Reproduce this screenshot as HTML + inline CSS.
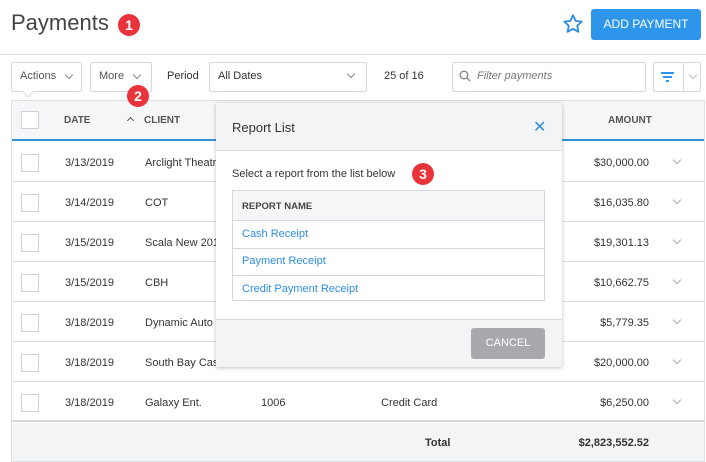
<!DOCTYPE html>
<html><head><meta charset="utf-8"><style>
*{box-sizing:border-box;margin:0;padding:0}
body{width:706px;height:462px;overflow:hidden;background:#fff;font-family:"Liberation Sans",sans-serif;color:#333;position:relative;font-size:11px}
.a{position:absolute}
.badge{position:absolute;width:22px;height:22px;border-radius:50%;background:#e8333a;color:#fff;font-weight:bold;font-size:14px;text-align:center;line-height:22px}
.box{position:absolute;border:1px solid #d4d9e0;background:#fff;border-radius:2px}
.cb{position:absolute;left:21px;width:18px;height:18px;border:1px solid #ccd1d8;background:#fff}
.row{position:absolute;left:11px;width:694px;height:40px;border-bottom:1px solid #dde1e7}
.t{position:absolute;font-size:11px;color:#333}
.chev{position:absolute;width:6px;height:6px;border-right:1px solid #888;border-bottom:1px solid #888;transform:rotate(45deg)}
</style></head><body>
<div class="a" style="left:11px;top:10px;font-size:22px;color:#444">Payments</div>
<div class="badge" style="left:118px;top:14px">1</div>
<svg class="a" style="left:562px;top:13px" width="22" height="22" viewBox="0 0 24 24"><path d="M12 2.5l2.9 6.1 6.6.8-4.9 4.5 1.3 6.6L12 17.2l-5.9 3.3 1.3-6.6L2.5 9.4l6.6-.8z" fill="none" stroke="#2b8de3" stroke-width="2" stroke-linejoin="round"/></svg>
<div class="a" style="left:591px;top:9px;width:110px;height:31px;background:#2d96ea;border-radius:3px;color:#fff;font-size:12px;text-align:center;line-height:31px">ADD PAYMENT</div>
<div class="a" style="left:0;top:54px;width:706px;height:1px;background:#d9dde3"></div>

<div class="box" style="left:11px;top:62px;width:71px;height:30px"></div>
<div class="t" style="left:20px;top:70px;color:#555">Actions</div><div class="chev" style="left:66px;top:72px"></div>
<div class="a" style="left:24px;top:88px;width:8px;height:8px;background:#fff;border-right:1px solid #d4d9e0;border-bottom:1px solid #d4d9e0;transform:rotate(45deg)"></div>
<div class="box" style="left:90px;top:62px;width:62px;height:30px"></div>
<div class="t" style="left:99px;top:70px;color:#555">More</div><div class="chev" style="left:134px;top:72px"></div>
<div class="t" style="left:167px;top:70px">Period</div>
<div class="box" style="left:209px;top:62px;width:158px;height:30px"></div>
<div class="t" style="left:218px;top:70px">All Dates</div><div class="chev" style="left:348px;top:71px"></div>
<div class="t" style="left:384px;top:70px">25 of 16</div>
<div class="box" style="left:452px;top:62px;width:194px;height:30px"></div>
<svg class="a" style="left:459px;top:70px" width="12" height="12" viewBox="0 0 12 12"><circle cx="5" cy="5" r="3.8" fill="none" stroke="#888" stroke-width="1.4"/><path d="M8 8l3 3" stroke="#888" stroke-width="1.5"/></svg>
<div class="t" style="left:477px;top:70px;font-style:italic;color:#777">Filter payments</div>
<div class="box" style="left:653px;top:62px;width:48px;height:30px"></div>
<div class="a" style="left:683px;top:62px;width:1px;height:30px;background:#d4d9e0"></div>
<div class="a" style="left:661px;top:72px;width:13px;height:2px;background:#2d96ea"></div>
<div class="a" style="left:663px;top:76px;width:9px;height:2px;background:#2d96ea"></div>
<div class="a" style="left:666px;top:80px;width:3px;height:2px;background:#2d96ea"></div>
<div class="chev" style="left:690px;top:72px;border-color:#bbb"></div>

<div class="a" style="left:11px;top:100px;width:694px;height:362px;border:1px solid #dde1e7;border-top:1px solid #dde1e7"></div>
<div class="a" style="left:12px;top:101px;width:692px;height:40px;background:#f5f6f8;border-bottom:2px solid #3a8fd9"></div>
<div class="cb" style="top:111px"></div>
<div class="t" style="left:64px;top:115px;font-size:10px;font-weight:bold;color:#555">DATE</div>
<div class="a" style="left:128px;top:118px;width:5px;height:5px;border-left:1px solid #555;border-top:1px solid #555;transform:rotate(45deg)"></div>
<div class="t" style="left:144px;top:115px;font-size:10px;font-weight:bold;color:#555">CLIENT</div>
<div class="t" style="left:608px;top:115px;font-size:10px;font-weight:bold;color:#555">AMOUNT</div>

<div class="row" style="top:142px"></div><div class="row" style="top:182px"></div><div class="row" style="top:222px"></div><div class="row" style="top:262px"></div><div class="row" style="top:302px"></div><div class="row" style="top:342px"></div><div class="row" style="top:382px;border-bottom:2px solid #d4d9e0"></div>
<div class="cb" style="top:154px"></div><div class="cb" style="top:194px"></div><div class="cb" style="top:234px"></div><div class="cb" style="top:274px"></div><div class="cb" style="top:314px"></div><div class="cb" style="top:354px"></div><div class="cb" style="top:394px"></div>
<div class="t" style="left:65px;top:157px">3/13/2019</div><div class="t" style="left:145px;top:157px">Arclight Theatres</div>
<div class="t" style="left:65px;top:197px">3/14/2019</div><div class="t" style="left:145px;top:197px">COT</div>
<div class="t" style="left:65px;top:237px">3/15/2019</div><div class="t" style="left:145px;top:237px">Scala New 2019</div>
<div class="t" style="left:65px;top:277px">3/15/2019</div><div class="t" style="left:145px;top:277px">CBH</div>
<div class="t" style="left:65px;top:317px">3/18/2019</div><div class="t" style="left:145px;top:317px">Dynamic Auto</div>
<div class="t" style="left:65px;top:357px">3/18/2019</div><div class="t" style="left:145px;top:357px">South Bay Casinos</div>
<div class="t" style="left:65px;top:397px">3/18/2019</div><div class="t" style="left:145px;top:397px">Galaxy Ent.</div>
<div class="t" style="left:261px;top:397px">1006</div><div class="t" style="left:381px;top:397px">Credit Card</div>
<div class="t" style="right:57px;top:157px">$30,000.00</div>
<div class="t" style="right:57px;top:197px">$16,035.80</div>
<div class="t" style="right:57px;top:237px">$19,301.13</div>
<div class="t" style="right:57px;top:277px">$10,662.75</div>
<div class="t" style="right:57px;top:317px">$5,779.35</div>
<div class="t" style="right:57px;top:357px">$20,000.00</div>
<div class="t" style="right:57px;top:397px">$6,250.00</div>
<div class="chev" style="left:674px;top:157px;border-color:#aaa"></div><div class="chev" style="left:674px;top:197px;border-color:#aaa"></div><div class="chev" style="left:674px;top:237px;border-color:#aaa"></div><div class="chev" style="left:674px;top:277px;border-color:#aaa"></div><div class="chev" style="left:674px;top:317px;border-color:#aaa"></div><div class="chev" style="left:674px;top:357px;border-color:#aaa"></div><div class="chev" style="left:674px;top:397px;border-color:#aaa"></div>
<div class="a" style="left:12px;top:423px;width:692px;height:38px;background:#f3f4f6"></div>
<div class="t" style="left:425px;top:437px;font-weight:bold">Total</div>
<div class="t" style="right:57px;top:437px;font-weight:bold">$2,823,552.52</div>

<div class="badge" style="left:127px;top:85px">2</div>

<div class="a" style="left:216px;top:103px;width:346px;height:264px;background:#fff;box-shadow:0 1px 4px rgba(0,0,0,.25)">
 <div class="a" style="left:0;top:0;width:346px;height:48px;background:#f3f4f6;border-bottom:1px solid #d9dde3"></div>
 <div class="t" style="left:16px;top:17px;font-size:13px">Report List</div>
 <div class="a" style="left:317px;top:14px;font-size:16px;color:#2d8de0">✕</div>
 <div class="t" style="left:16px;top:65px">Select a report from the list below</div>
 <div class="a" style="left:16px;top:87px;width:313px;height:111px;border:1px solid #d4d9e0">
  <div class="a" style="left:0;top:0;width:311px;height:30px;background:#f5f6f8;border-bottom:1px solid #d4d9e0"></div>
  <div class="t" style="left:9px;top:10px;font-size:9.5px;font-weight:bold;color:#444">REPORT NAME</div>
  <div class="t" style="left:9px;top:37px;color:#2d8de0">Cash Receipt</div>
  <div class="a" style="left:0;top:57px;width:311px;height:1px;background:#d4d9e0"></div>
  <div class="t" style="left:9px;top:64px;color:#2d8de0">Payment Receipt</div>
  <div class="a" style="left:0;top:84px;width:311px;height:1px;background:#d4d9e0"></div>
  <div class="t" style="left:9px;top:92px;color:#2d8de0">Credit Payment Receipt</div>
 </div>
 <div class="a" style="left:0;top:216px;width:346px;height:48px;background:#f3f4f6;border-top:1px solid #d9dde3"></div>
 <div class="a" style="left:255px;top:225px;width:74px;height:31px;background:#a7a9ad;border-radius:3px;color:#fff;font-size:11px;text-align:center;line-height:31px">CANCEL</div>
</div>
<div class="badge" style="left:412px;top:163px">3</div>
</body></html>
